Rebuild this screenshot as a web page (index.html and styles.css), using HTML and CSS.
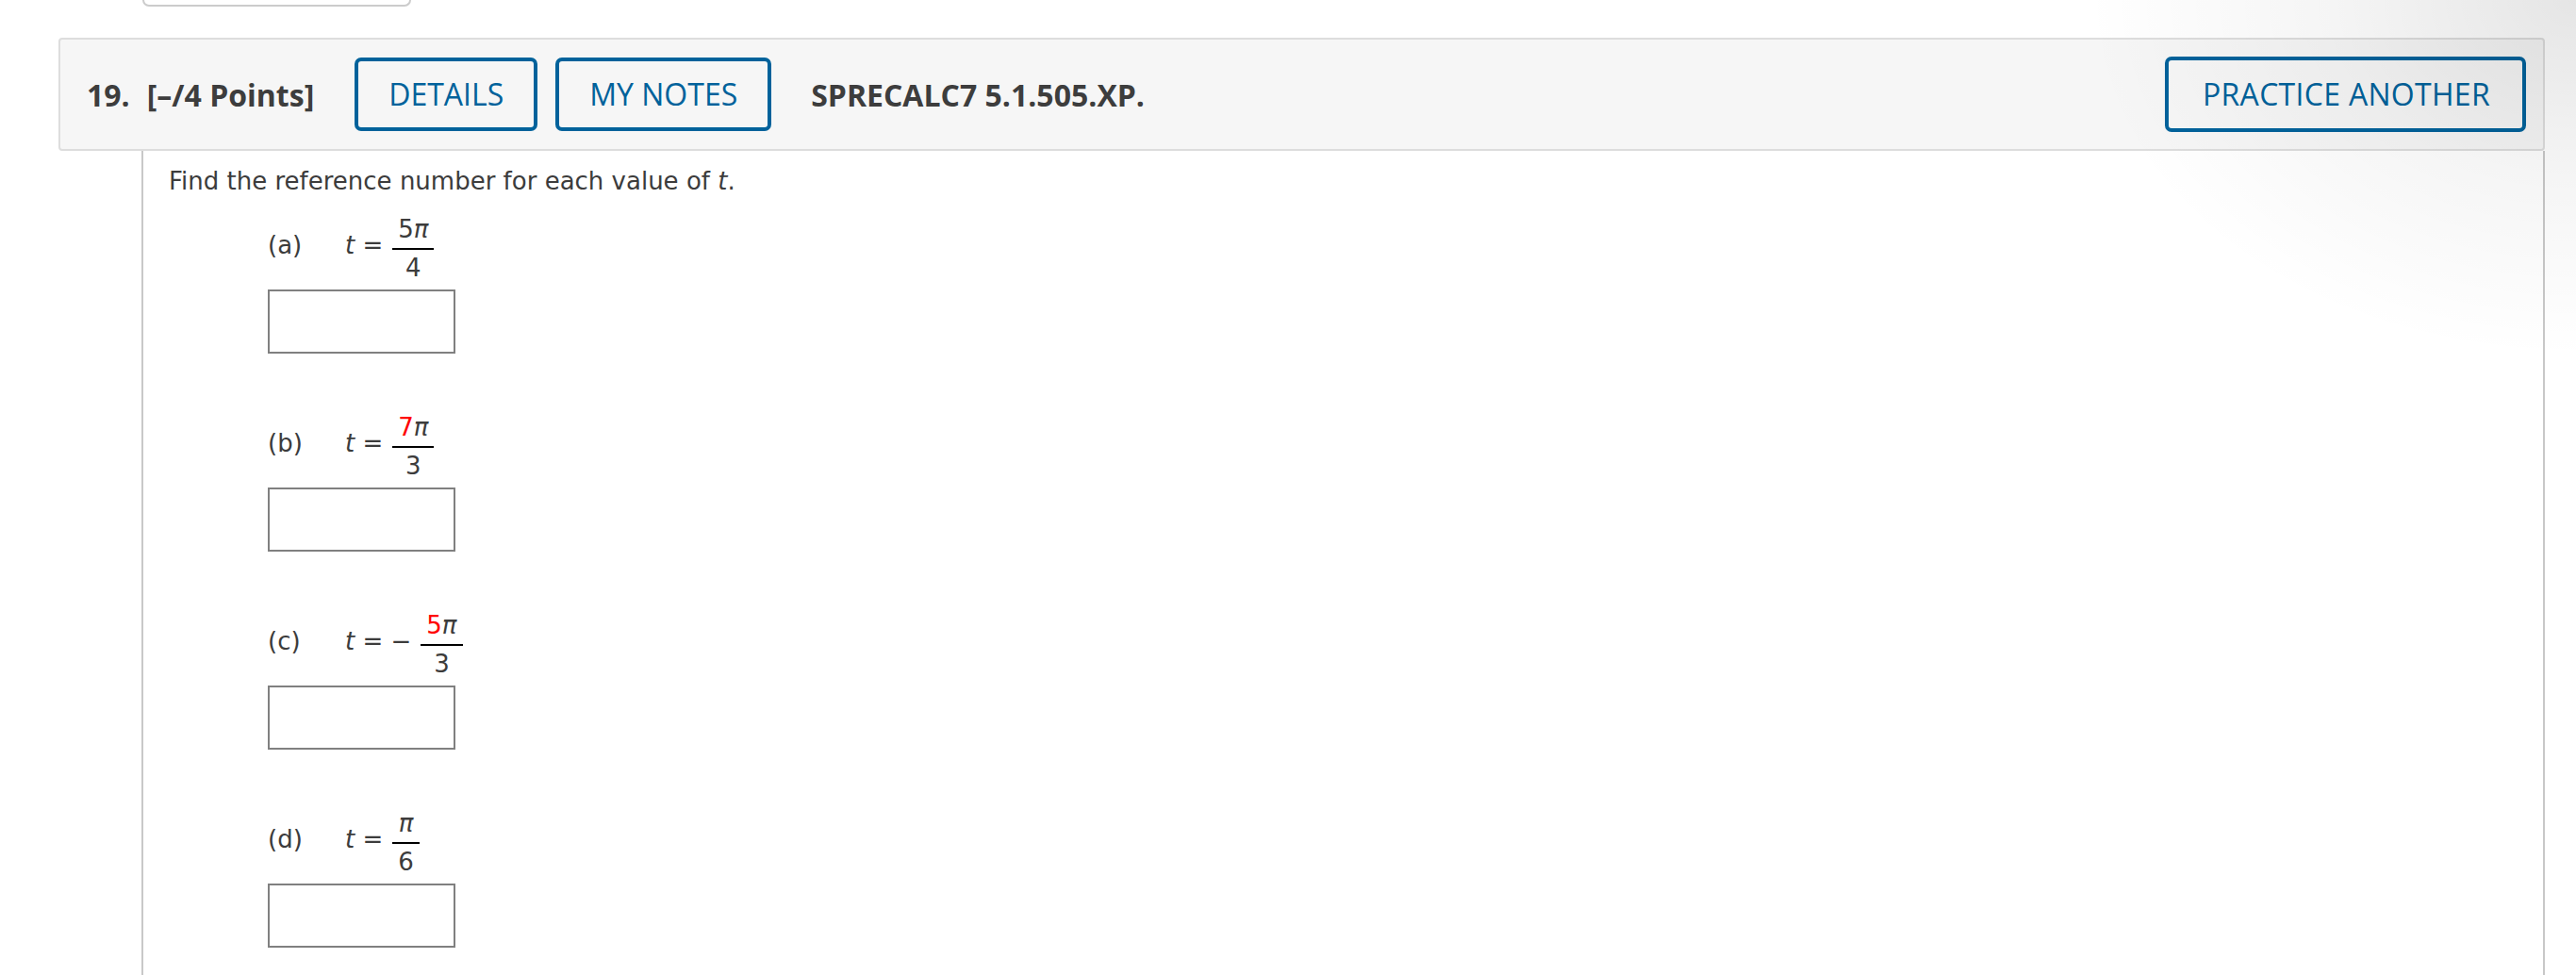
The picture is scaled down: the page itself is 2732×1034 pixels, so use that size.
FILE: index.html
```html
<!DOCTYPE html>
<html lang="en">
<head>
<meta charset="utf-8">
<title>Question 19</title>
<link rel="stylesheet" href="styles.css">
</head>
<body>
<div class="prev-box"></div>
<div class="question">
  <div class="q-header">
    <span class="q-num">19.</span>
    <span class="q-points">[–/4 Points]</span>
    <button class="btn">DETAILS</button>
    <button class="btn">MY NOTES</button>
    <span class="q-code">SPRECALC7 5.1.505.XP.</span>
    <button class="btn btn-right">PRACTICE ANOTHER</button>
  </div>
  <div class="q-body">
    <p class="prompt">Find the reference number for each value of <i>t</i>.</p>

    <div class="part">
      <div class="expr">
        <span class="label">(a)</span>
        <span class="lhs"><i>t</i> =</span>
        <span class="frac">
          <span class="num">5<i class="pi">π</i></span>
          <span class="den">4</span>
        </span>
      </div>
      <div class="answer"></div>
    </div>

    <div class="part">
      <div class="expr">
        <span class="label">(b)</span>
        <span class="lhs"><i>t</i> =</span>
        <span class="frac">
          <span class="num"><span class="red">7</span><i class="pi">π</i></span>
          <span class="den">3</span>
        </span>
      </div>
      <div class="answer"></div>
    </div>

    <div class="part">
      <div class="expr">
        <span class="label">(c)</span>
        <span class="lhs"><i>t</i> = −</span>
        <span class="frac">
          <span class="num"><span class="red">5</span><i class="pi">π</i></span>
          <span class="den">3</span>
        </span>
      </div>
      <div class="answer"></div>
    </div>

    <div class="part">
      <div class="expr">
        <span class="label">(d)</span>
        <span class="lhs"><i>t</i> =</span>
        <span class="frac">
          <span class="num"><i class="pi">π</i></span>
          <span class="den">6</span>
        </span>
      </div>
      <div class="answer"></div>
    </div>
  </div>
</div>
<div class="corner-shade"></div>
</body>
</html>
```

FILE: styles.css
```css
html, body {
  margin: 0;
  padding: 0;
  background: #ffffff;
}

body {
  font-family: "DejaVu Sans", Verdana, sans-serif;
  color: #3c3c3c;
  width: 2732px;
  height: 1034px;
  overflow: hidden;
  position: relative;
}

.prev-box {
  box-sizing: border-box;
  margin-left: 151px;
  width: 285px;
  height: 7px;
  border: 2px solid #cccccc;
  border-top: none;
  border-radius: 0 0 8px 8px;
}

.question {
  margin: 33px 33px 0 62px;
}

.q-header {
  box-sizing: border-box;
  height: 120px;
  display: flex;
  align-items: center;
  padding: 0 18px 0 28px;
  background: #f6f6f6;
  border: 2px solid #dddddd;
  border-radius: 4px;
  font-family: "Open Sans", "Liberation Sans", sans-serif;
  font-size: 32px;
  color: #3d3d3d;
}

.q-num {
  font-weight: 700;
  margin-right: 18px;
}

.q-points {
  font-weight: 700;
  margin-right: 43px;
}

.q-code {
  font-weight: 700;
  margin-left: 23px;
}

.btn {
  box-sizing: border-box;
  height: 78px;
  padding: 0 32px;
  margin: 0 19px 0 0;
  border: 4px solid #00629b;
  border-radius: 7px;
  background: transparent;
  color: #00629b;
  font-family: "Open Sans", "Liberation Sans", sans-serif;
  font-size: 32px;
  font-weight: 400;
  line-height: 1;
  display: flex;
  align-items: center;
}

.btn-right {
  margin: 0 0 0 auto;
  height: 80px;
  padding: 0 34px 0 36px;
  letter-spacing: 0.3px;
}

.q-body {
  margin-left: 88px;
  border-left: 2px solid #c8c8c8;
  border-right: 2px solid #c8c8c8;
  padding: 17px 0 120px 27px;
  font-size: 26px;
  line-height: 30px;
}

.prompt {
  margin: 0 0 21px 0;
}

.part {
  padding-left: 105px;
  margin-bottom: 63px;
}

.expr {
  display: flex;
  align-items: flex-start;
}

.label {
  width: 82px;
  margin-top: 17px;
}

.lhs {
  margin-top: 17px;
  margin-right: 10px;
  white-space: nowrap;
}

.frac {
  display: inline-flex;
  flex-direction: column;
  align-items: stretch;
  text-align: center;
}

.num {
  padding: 0 6px 5px 6px;
  border-bottom: 2px solid #000000;
}

.den {
  padding: 4px 6px 0 6px;
}

.pi {
  font-style: italic;
}

.red {
  color: #ff0000;
}

.answer {
  box-sizing: border-box;
  width: 199px;
  height: 68px;
  margin-top: 8px;
  border: 2px solid #808080;
  background: #ffffff;
}

.corner-shade {
  position: absolute;
  top: 0;
  right: 0;
  width: 700px;
  height: 500px;
  pointer-events: none;
  background: radial-gradient(ellipse 520px 380px at 100% 0%, rgba(0, 0, 0, 0.1) 0%, rgba(0, 0, 0, 0.04) 50%, rgba(0, 0, 0, 0) 100%);
}
```
